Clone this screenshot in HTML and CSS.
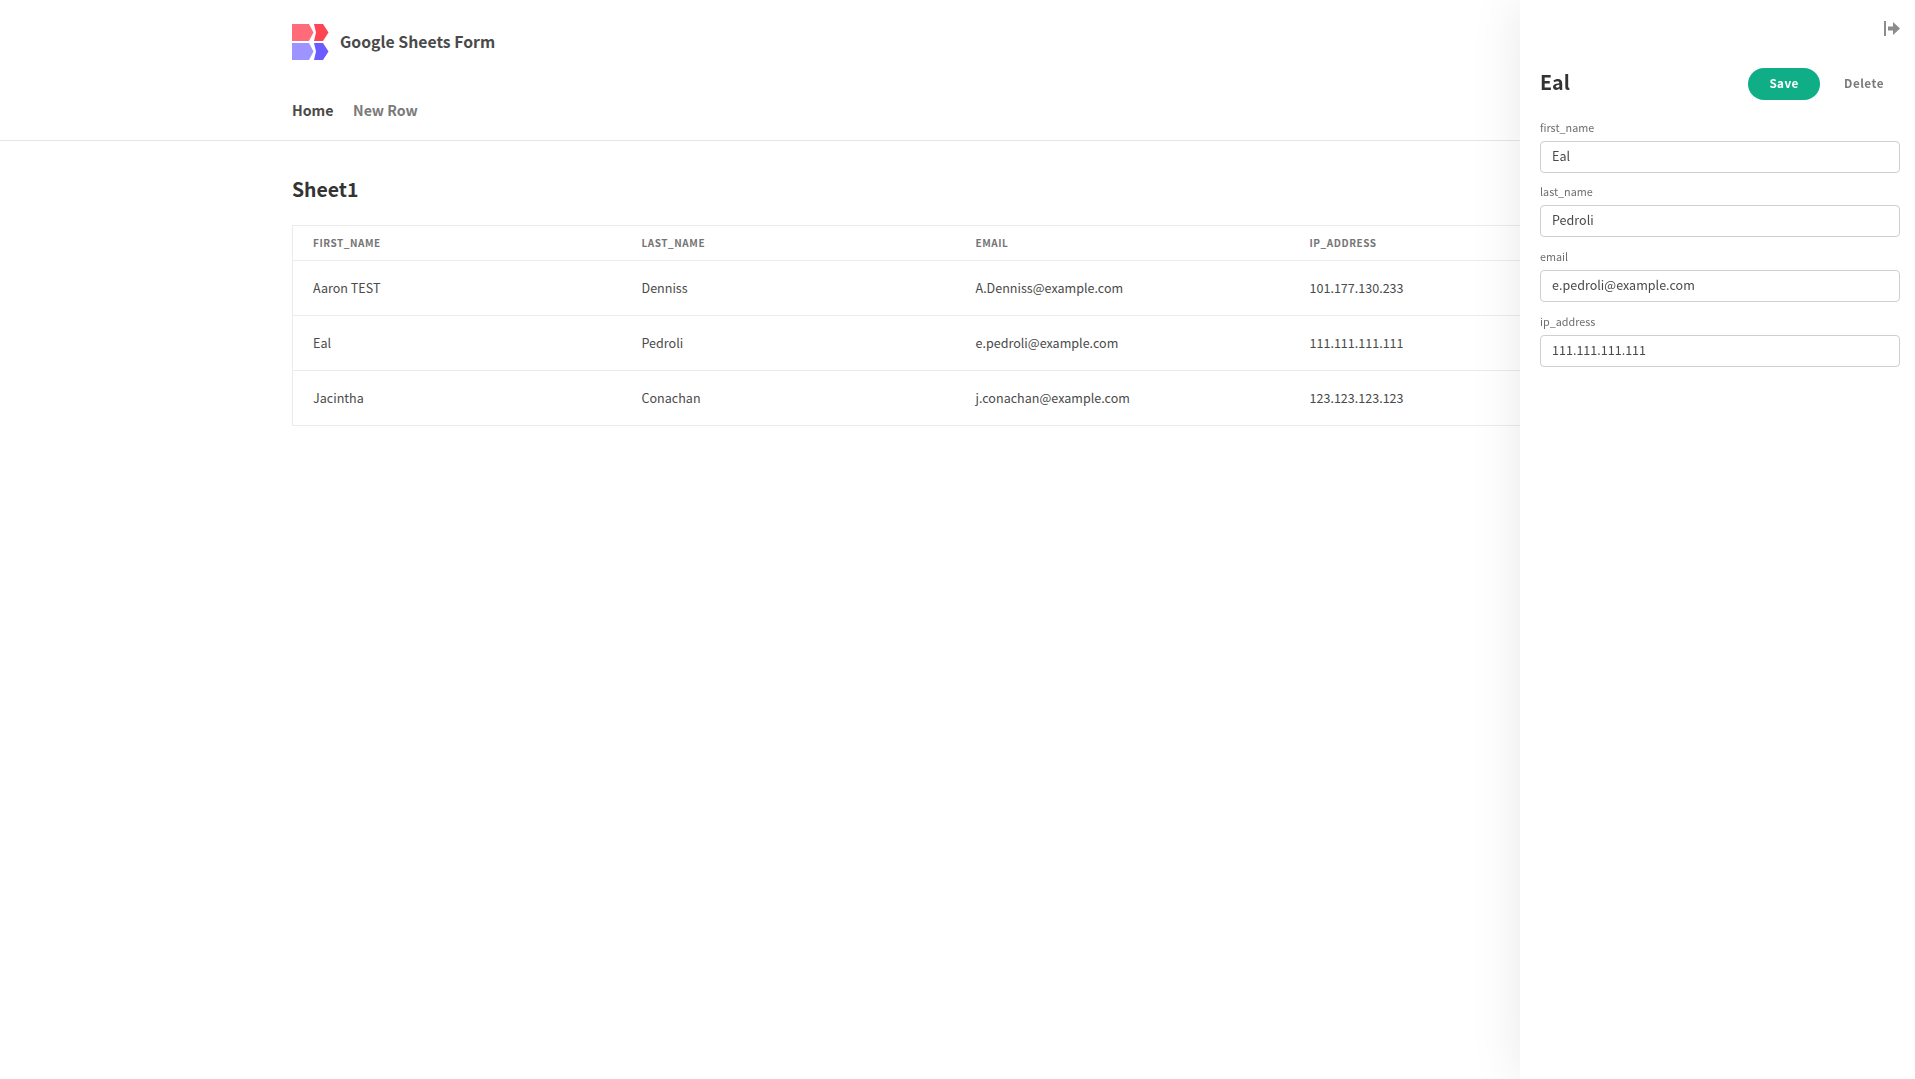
FILE: index.html
```html
<!DOCTYPE html>
<html lang="en">
<head>
<meta charset="utf-8">
<title>Google Sheets Form</title>
<link rel="stylesheet" href="styles.css">
</head>
<body>
<header class="header">
  <div class="inner">
    <div class="brand">
      <svg class="logo" width="37" height="36" viewBox="0 0 37 36" aria-hidden="true">
        <path fill="#ff6b78" d="M0 0H17L21.5 8.5L17 17H0Z"/>
        <path fill="#ff4454" d="M22 0H31L36.500 8.500L31 17H22L24 8.5Z"/>
        <path fill="#9d94ff" d="M0 19H17L21.5 27.5L17 36H0Z"/>
        <path fill="#6a5cff" d="M22 19H31L36.5 27.5L31 36H22L24 27.5Z"/>
      </svg>
      <span class="brand-name">Google Sheets Form</span>
    </div>
    <nav class="nav">
      <a class="nav-link active">Home</a>
      <a class="nav-link">New Row</a>
    </nav>
  </div>
</header>
<main class="main">
  <h1 class="sheet-title">Sheet1</h1>
  <table class="table">
    <colgroup><col class="c1"><col class="c2"><col class="c3"><col class="c4"></colgroup>
    <thead>
      <tr><th>first_name</th><th>last_name</th><th>email</th><th>ip_address</th></tr>
    </thead>
    <tbody>
      <tr><td>Aaron TEST</td><td>Denniss</td><td>A.Denniss@example.com</td><td>101.177.130.233</td></tr>
      <tr><td>Eal</td><td>Pedroli</td><td>e.pedroli@example.com</td><td>111.111.111.111</td></tr>
      <tr><td>Jacintha</td><td>Conachan</td><td>j.conachan@example.com</td><td>123.123.123.123</td></tr>
    </tbody>
  </table>
</main>
<aside class="panel">
  <div class="panel-top">
    <svg width="16" height="15" viewBox="0 0 16 15" aria-hidden="true">
      <rect x="0" y="0" width="2" height="15" fill="#8c8c8c"/>
      <path fill="#8c8c8c" d="M4 5.5H9V1L16 7.500L9 14V9.5H4Z"/>
    </svg>
  </div>
  <div class="panel-head">
    <h2 class="panel-title">Eal</h2>
    <div class="actions">
      <button class="btn-save" type="button">Save</button>
      <button class="btn-delete" type="button">Delete</button>
    </div>
  </div>
  <form class="form">
    <div class="field"><label class="label">first_name</label><input class="input" value="Eal"></div>
    <div class="field"><label class="label">last_name</label><input class="input" value="Pedroli"></div>
    <div class="field"><label class="label">email</label><input class="input" value="e.pedroli@example.com"></div>
    <div class="field"><label class="label">ip_address</label><input class="input" value="111.111.111.111"></div>
  </form>
</aside>
</body>
</html>
```
FILE: styles.css
```css
* { box-sizing: border-box; }
html, body { height: 100%; }
body {
  margin: 0;
  background: #fff;
  overflow: hidden;
  font-family: "Noto Sans CJK SC", "Noto Sans", sans-serif;
  color: #4a4a4a;
}
.header { height: 141px; border-bottom: 1px solid #e6e6e6; }
.inner { padding: 24px 0 0 292px; }
.brand { display: flex; align-items: center; gap: 11px; height: 36px; }
.logo { display: block; }
.brand-name { font-size: 15.8px; line-height: 24px; font-weight: 700; color: #4a4a4a; }
.nav { display: flex; gap: 19.5px; margin-top: 38px; }
.nav-link { font-size: 14.2px; line-height: 24px; font-weight: 700; color: #7a7a7a; }
.nav-link.active { color: #4a4a4a; }
.main { padding: 33px 0 0 292px; }
.sheet-title { margin: 0 0 21px; font-size: 19.4px; line-height: 30px; font-weight: 700; color: #333; }
.table {
  width: 1331px;
  table-layout: fixed;
  border-collapse: collapse;
  border: 1px solid #ebebeb;
}
.c1 { width: 329px; }
.c2 { width: 334px; }
.c3 { width: 334px; }
.table th {
  height: 35px;
  padding: 0 20px;
  text-align: left;
  font-size: 10px;
  line-height: 14px;
  font-weight: 700;
  letter-spacing: 0.55px;
  text-transform: uppercase;
  color: #757575;
  border-bottom: 1px solid #ebebeb;
}
.table td {
  height: 55px;
  padding: 0 20px 2px;
  font-size: 12.55px;
  line-height: 19px;
  color: #4a4a4a;
  border-bottom: 1px solid #ebebeb;
}
.panel {
  position: fixed;
  top: 0;
  right: 0;
  bottom: 0;
  width: 395px;
  padding: 0 15px 0 20px;
  background: #fff;
  box-shadow: 0 0 50px rgba(0, 0, 0, 0.09);
}
.panel-top { display: flex; justify-content: flex-end; padding-top: 21px; height: 68px; }
.panel-head { display: flex; justify-content: space-between; align-items: center; height: 32px; }
.panel-title { margin: -5px 0 0; font-size: 19.6px; line-height: 30px; font-weight: 700; color: #333; }
.actions { display: flex; align-items: center; padding-right: 16px; gap: 24px; }
.btn-save {
  width: 72px;
  height: 32px;
  padding: 0 0 2px;
  border: 0;
  border-radius: 16px;
  background: #10ae87;
  color: #fff;
  font: 700 11.7px/16px "Noto Sans CJK SC", sans-serif;
  letter-spacing: 0.4px;
}
.btn-delete {
  padding: 0 0 2px;
  border: 0;
  background: none;
  color: #7a7a7a;
  font: 700 11.7px/16px "Noto Sans CJK SC", sans-serif;
  letter-spacing: 0.5px;
}
.form { display: flex; flex-direction: column; gap: 10.7px; margin-top: 18.6px; }
.field { display: flex; flex-direction: column; gap: 5px; }
.label { font-size: 10.8px; line-height: 17px; color: #6e6e6e; }
.input {
  height: 32px;
  width: 100%;
  padding: 0 11px 3px;
  border: 1px solid #cfcfcf;
  border-radius: 4px;
  font: 400 12.55px/20px "Noto Sans CJK SC", sans-serif;
  color: #4a4a4a;
  background: #fff;
}
```
